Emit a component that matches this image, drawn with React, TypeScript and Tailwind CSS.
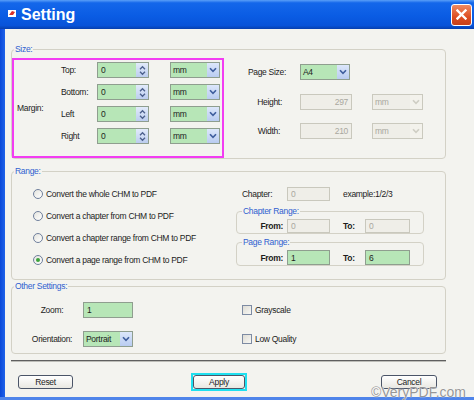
import { FC, ReactNode } from "react";

// small Win XP style "Setting" dialog

const UpDown: FC = () => (
  <svg width="7" height="11" viewBox="0 0 7 11" fill="none" stroke="#4b5f8c" strokeWidth="1.3">
    <path d="M1 4.2 L3.5 1.7 L6 4.2" />
    <path d="M1 6.8 L3.5 9.3 L6 6.8" />
  </svg>
);

const Chevron: FC<{ color?: string }> = ({ color = "#3f5e9e" }) => (
  <svg width="8" height="6" viewBox="0 0 8 6" fill="none" stroke={color} strokeWidth="1.6">
    <path d="M1 1.2 L4 4.4 L7 1.2" />
  </svg>
);

const Spin: FC<{ value: string }> = ({ value }) => (
  <div className="w-[52px] h-[16px] flex border border-[#8f9e8f] bg-[#b7e6b7]">
    <span className="flex-1 pl-[3px] leading-[14px]">{value}</span>
    <span className="w-[12px] flex items-center justify-center bg-[linear-gradient(to_bottom,#e2ebfb,#bccdef)]">
      <UpDown />
    </span>
  </div>
);

const Select: FC<{ value: string; className: string; disabled?: boolean }> = ({
  value,
  className,
  disabled,
}) => (
  <div
    className={`${className} h-[16px] flex border ${
      disabled ? "border-[#cac9be] bg-[#efeee8] text-[#a9a89f]" : "border-[#8f9e8f] bg-[#b7e6b7]"
    }`}
  >
    <span className="flex-1 pl-[2px] leading-[14px]">{value}</span>
    <span
      className={`w-[12px] flex items-center justify-center ${
        disabled ? "bg-[#f3f2ec]" : "bg-[linear-gradient(to_bottom,#dce7fb,#b9ccf1)]"
      }`}
    >
      <Chevron color={disabled ? "#cfcec4" : "#3f5e9e"} />
    </span>
  </div>
);

const Field: FC<{ value: string; className: string; disabled?: boolean; right?: boolean }> = ({
  value,
  className,
  disabled,
  right,
}) => (
  <div
    className={`${className} border px-[3px] flex items-center ${right ? "justify-end" : ""} ${
      disabled ? "border-[#c9c8bd] bg-[#efeee8] text-[#a9a89f]" : "border-[#8f9e8f] bg-[#b7e6b7]"
    }`}
  >
    {value}
  </div>
);

const Group: FC<{ label: string; className?: string; children: ReactNode }> = ({
  label,
  className = "",
  children,
}) => (
  <fieldset className={`border border-[#d3d1c6] rounded-[4px] ${className}`}>
    <legend className="ml-[2px] px-[1px] leading-[12px] text-[#2f5fd0]">{label}</legend>
    {children}
  </fieldset>
);

const Radio: FC<{ label: string; checked?: boolean }> = ({ label, checked }) => (
  <div className="h-[14px] flex items-center">
    <span className="w-[10px] h-[10px] rounded-full border border-[#6f7f9c] bg-[linear-gradient(135deg,#e4e4de,#ffffff)] flex items-center justify-center">
      {checked && <span className="w-[4px] h-[4px] rounded-full bg-[#3da33d]" />}
    </span>
    <span className="ml-[3px]">{label}</span>
  </div>
);

const Check: FC<{ label: string }> = ({ label }) => (
  <div className="flex items-center pl-[6px]">
    <span className="w-[10px] h-[10px] border border-[#7d8ba3] bg-[linear-gradient(135deg,#dedcd4,#f7f7f4)]" />
    <span className="ml-[3px]">{label}</span>
  </div>
);

const Btn: FC<{ label: string; className?: string }> = ({ label, className = "" }) => (
  <div
    className={`${className} h-[14px] border border-[#4b5568] rounded-[3px] bg-[linear-gradient(to_bottom,#ffffff,#e9e8e2)] flex items-center justify-center`}
  >
    {label}
  </div>
);

const marginRows = ["Top:", "Bottom:", "Left", "Right"];

export default function App() {
  return (
    <div className="w-[474px] h-[400px] overflow-hidden relative flex flex-col whitespace-nowrap bg-[#f3f3ef] text-[#1c1c1c] text-[8.5px] leading-[12px] tracking-[-0.3px] font-['Liberation_Sans',Arial,sans-serif]">
      {/* title bar */}
      <div className="h-[29px] shrink-0 flex items-center bg-[linear-gradient(to_bottom,#5a9ff8_0%,#1467ea_10%,#0a5ce4_55%,#0853d9_88%,#073fae_100%)]">
        <svg width="10" height="9" viewBox="0 0 10 9" className="ml-[7px] mt-[-3px]">
          <rect x="1" y="1" width="8" height="7" fill="#fff" />
          <path d="M2 6 L5 2 L8 3 L6 6 Z" fill="#d8312a" />
        </svg>
        <span className="ml-[4px] text-white font-bold text-[16px] tracking-normal leading-none">Setting</span>
        <div className="ml-auto mr-[2px] w-[21px] h-[22px] rounded-[3px] border border-white bg-[linear-gradient(to_bottom,#ee8a62,#de4e22_60%,#c8401a)] flex items-center justify-center">
          <svg width="11" height="11" viewBox="0 0 11 11" stroke="#fff" strokeWidth="2.4" strokeLinecap="square">
            <path d="M1.5 1.5 L9.5 9.5 M9.5 1.5 L1.5 9.5" />
          </svg>
        </div>
      </div>

      <div className="flex-1 flex min-h-0">
        <div className="w-[5px] bg-[linear-gradient(to_right,#0a48d8,#1f62ea)]" />
        <div className="flex flex-col pl-[6px]">
          {/* Size */}
          <Group label="Size:" className="w-[435px] mt-[14px]">
            <div className="flex mt-[3px]">
              <div className="w-[212px] h-[100px] border-2 border-[#f23cf2] flex items-center">
                <span className="ml-[3px] w-[44px]">Margin:</span>
                <div className="flex flex-col gap-[6px] self-start pt-[2px]">
                  {marginRows.map((r) => (
                    <div key={r} className="h-[16px] flex items-center">
                      <span className="w-[36px]">{r}</span>
                      <Spin value="0" />
                      <Select value="mm" className="w-[50px] ml-[21px]" />
                    </div>
                  ))}
                </div>
              </div>
              <div className="flex flex-col ml-[22px] pt-[6px]">
                <div className="h-[16px] flex items-center">
                  <span className="w-[40px] text-right">Page Size:</span>
                  <Select value="A4" className="w-[50px] ml-[14px]" />
                </div>
                <div className="h-[16px] flex items-center mt-[14px]">
                  <span className="w-[36px] text-right">Height:</span>
                  <Field value="297" className="w-[52px] h-[16px] ml-[18px]" disabled right />
                  <Select value="mm" className="w-[51px] ml-[20px]" disabled />
                </div>
                <div className="h-[16px] flex items-center mt-[13px]">
                  <span className="w-[34px] text-right">Width:</span>
                  <Field value="210" className="w-[52px] h-[16px] ml-[20px]" disabled right />
                  <Select value="mm" className="w-[51px] ml-[20px]" disabled />
                </div>
              </div>
            </div>
          </Group>

          {/* Range */}
          <Group label="Range:" className="w-[435px] mt-[6px]">
            <div className="flex pt-[10px] pb-[12px]">
              <div className="w-[224px] pl-[21px] flex flex-col gap-[8px]">
                <Radio label="Convert the whole CHM to PDF" />
                <Radio label="Convert a chapter from CHM to PDF" />
                <Radio label="Convert a chapter range from CHM to PDF" />
                <Radio label="Convert a page range from CHM to PDF" checked />
              </div>
              <div className="w-[188px] flex flex-col">
                <div className="h-[14px] flex items-center">
                  <span className="w-[51px] pl-[6px]">Chapter:</span>
                  <Field value="0" className="w-[43px] h-[14px]" disabled />
                  <span className="ml-[13px]">example:1/2/3</span>
                </div>
                <Group label="Chapter Range:" className="mt-[4px] [&>legend]:ml-[5px]">
                  <div className="h-[14px] mt-[2px] flex items-center">
                    <span className="w-[50px] pr-[4px] text-right font-bold">From:</span>
                    <Field value="0" className="w-[43px] h-[14px]" disabled />
                    <span className="ml-[13px] w-[22px] font-bold">To:</span>
                    <Field value="0" className="w-[45px] h-[14px]" disabled />
                  </div>
                </Group>
                <Group label="Page Range:" className="mt-[2px] [&>legend]:ml-[5px]">
                  <div className="h-[15px] mt-[2px] flex items-center">
                    <span className="w-[50px] pr-[4px] text-right font-bold">From:</span>
                    <Field value="1" className="w-[43px] h-[15px]" />
                    <span className="ml-[13px] w-[22px] font-bold">To:</span>
                    <Field value="6" className="w-[45px] h-[15px]" />
                  </div>
                </Group>
              </div>
            </div>
          </Group>

          {/* Other settings */}
          <Group label="Other Settings:" className="w-[435px]">
            <div className="flex flex-col pt-[10px] pb-[6px]">
              <div className="h-[16px] flex items-center">
                <div className="w-[224px] flex items-center">
                  <span className="ml-[15px] w-[50px] text-center">Zoom:</span>
                  <Field value="1" className="w-[50px] h-[16px] ml-[6px]" />
                </div>
                <Check label="Grayscale" />
              </div>
              <div className="h-[16px] flex items-center mt-[13px]">
                <div className="w-[224px] flex items-center">
                  <span className="ml-[15px] w-[50px] text-center">Orientation:</span>
                  <Select value="Portrait" className="w-[50px] ml-[6px]" />
                </div>
                <Check label="Low Quality" />
              </div>
            </div>
          </Group>

          {/* separator */}
          <div className="w-[435px] mt-[6px] h-[1px] bg-[#5f5f5f]" />
          <div className="w-[435px] h-[1px] bg-[#bdbdb8]" />

          {/* buttons */}
          <div className="h-[18px] mt-[11px] flex items-center">
            <Btn label="Reset" className="ml-[7px] w-[55px]" />
            <div className="ml-[118px] w-[56px] h-[18px] border-2 border-[#1fe0f0]">
              <Btn label="Apply" className="w-full" />
            </div>
            <Btn label="Cancel" className="ml-[134px] w-[56px]" />
          </div>
        </div>
      </div>

      <div className="h-[3px] shrink-0 bg-[#4f84ea]" />

      <span className="absolute right-[8px] bottom-0 text-[14px] leading-[16px] tracking-normal text-[#979797] font-['Liberation_Sans',Arial,sans-serif] [text-shadow:0_0_1px_#ffffff,0_0_1px_#ffffff]">
        ©VeryPDF.com
      </span>
    </div>
  );
}
